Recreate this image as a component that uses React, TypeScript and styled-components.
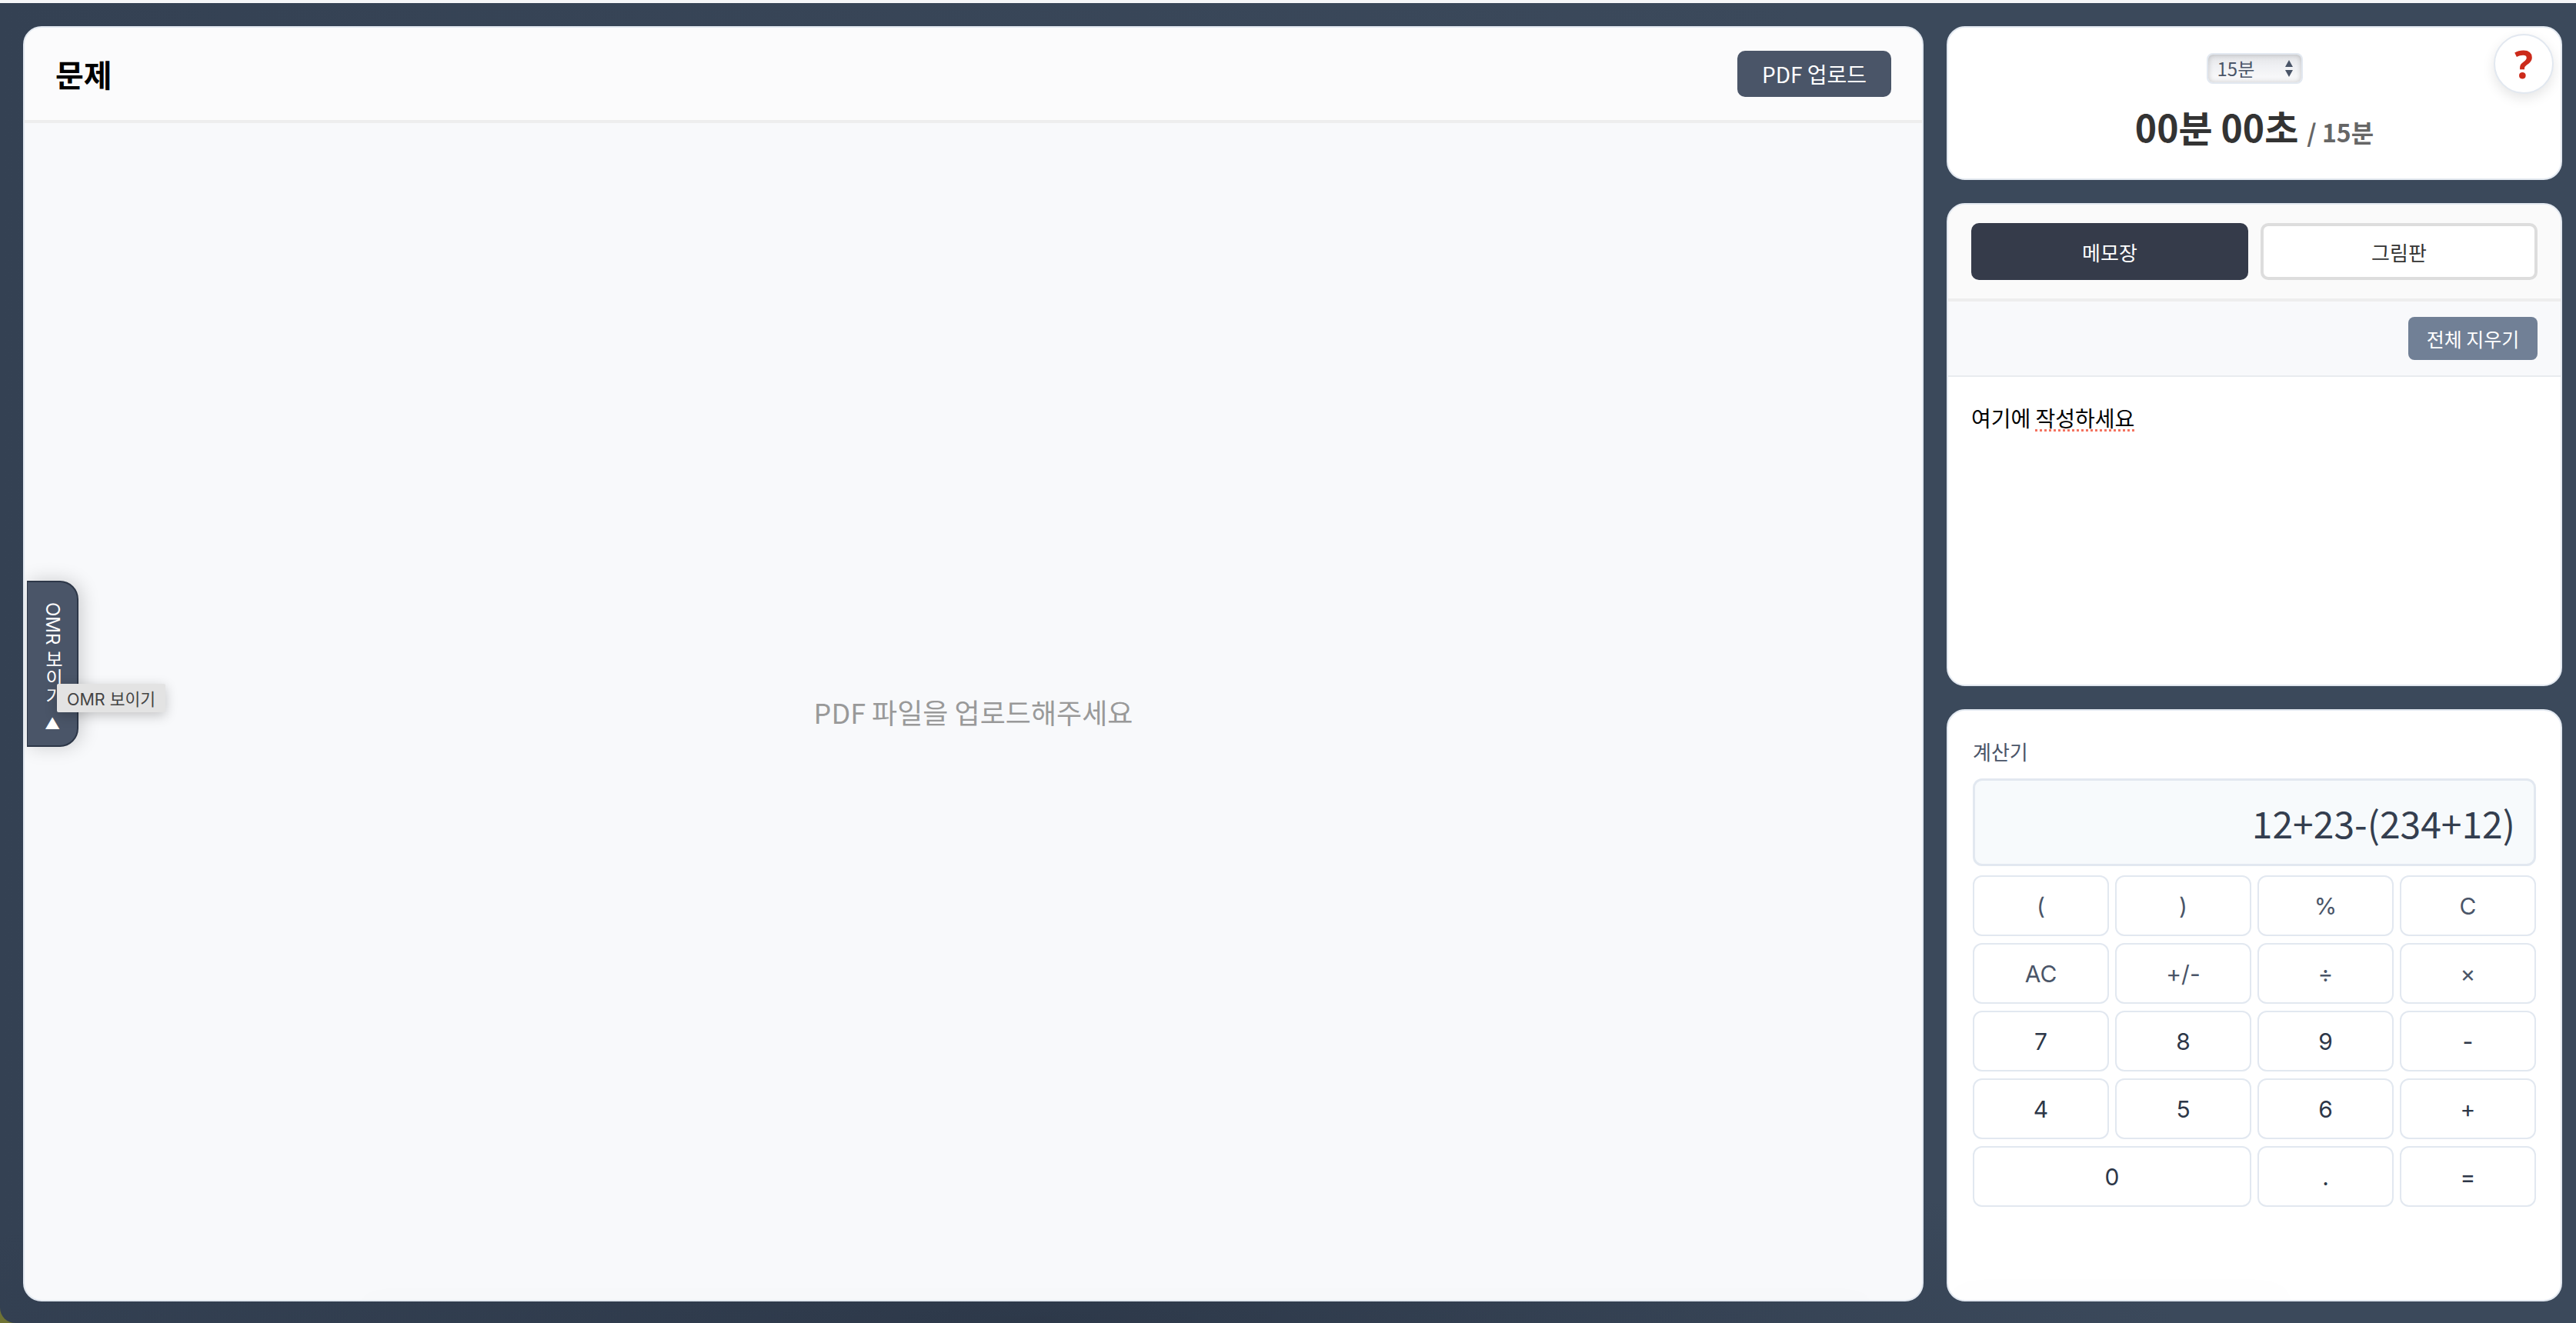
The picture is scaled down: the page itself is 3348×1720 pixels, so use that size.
import styled, { createGlobalStyle } from "styled-components";

const GlobalStyle = createGlobalStyle`
  html, body {
    margin: 0;
    padding: 0;
    background: linear-gradient(90deg, #6f7334 0 50%, #3a4759 50%);
  }
  * {
    box-sizing: border-box;
  }
`;

const Page = styled.div`
  width: 3348px;
  height: 1720px;
  padding: 30px 18px 28px 30px;
  border-top: 4px solid #f5f6f8;
  border-bottom-left-radius: 20px;
  display: grid;
  grid-template-columns: 2470px 800px;
  column-gap: 30px;
  background:
    radial-gradient(ellipse 1500px 260px at 40% 100%, rgba(36, 46, 62, 0.55), rgba(36, 46, 62, 0)),
    linear-gradient(90deg, #344153, #3b495b 70%);
  font-family: "Noto Sans CJK KR", "Noto Sans", sans-serif;
  overflow: hidden;
`;

const Panel = styled.main`
  position: relative;
  display: flex;
  flex-direction: column;
  border: 2px solid #e2e8f0;
  border-radius: 24px;
  background: #f8f9fb;
  overflow: hidden;
`;

const PanelHeader = styled.header`
  height: 124px;
  flex: none;
  padding: 0 40px;
  display: flex;
  align-items: center;
  justify-content: space-between;
  background: #fbfbfc;
  border-bottom: 4px solid #eeeeee;
`;

const Title = styled.h1`
  margin: 0;
  font-size: 40px;
  font-weight: 700;
  color: #000;
`;

const UploadButton = styled.button`
  width: 200px;
  height: 60px;
  border: 0;
  border-radius: 10px;
  background: #4a5568;
  color: #fff;
  font: inherit;
  font-size: 28px;
`;

const PanelBody = styled.div`
  flex: 1;
  display: flex;
  align-items: center;
  justify-content: center;
  color: #999;
  font-size: 36px;
`;

const EdgeShadow = styled.div<{ $left: number; $right: number; $blur: number }>`
  position: absolute;
  left: ${(p) => p.$left}px;
  right: ${(p) => p.$right}px;
  bottom: -4px;
  height: 4px;
  box-shadow: 0 0 ${(p) => p.$blur}px rgba(0, 0, 0, 0.1);
  pointer-events: none;
`;

const OmrToggle = styled.button`
  position: absolute;
  left: 3px;
  top: 50%;
  transform: translateY(-50%);
  width: 67px;
  height: 216px;
  padding: 26px 0 18px;
  display: flex;
  flex-direction: column;
  align-items: center;
  justify-content: space-between;
  border: 2px solid #2d3748;
  border-left-width: 1px;
  border-radius: 0 24px 24px 0;
  background: #4a5568;
  color: #fff;
  font-family: "Inter", "Noto Sans CJK KR", sans-serif;
  font-size: 24px;
  box-shadow: 4px 0 24px rgba(0, 0, 0, 0.18);
`;

const OmrLabel = styled.span`
  writing-mode: vertical-rl;
  white-space: nowrap;
  line-height: 1;
`;

const OmrArrow = styled.span`
  font-size: 20px;
  line-height: 1;
`;

const Tip = styled.div`
  position: absolute;
  left: 42px;
  top: 853px;
  height: 37px;
  padding: 0 13px;
  display: flex;
  align-items: center;
  border-radius: 2px;
  background: #e3e3e3;
  color: #444;
  font-family: "Inter", "Noto Sans CJK KR", sans-serif;
  font-size: 21.5px;
  white-space: nowrap;
  box-shadow: 0 4px 16px rgba(0, 0, 0, 0.22);
`;

const Side = styled.aside`
  display: grid;
  grid-template-rows: 200px 628px 770px;
  row-gap: 30px;
`;

const Card = styled.section<{ $bg?: string }>`
  position: relative;
  display: flex;
  flex-direction: column;
  border: 2px solid #e2e8f0;
  border-radius: 24px;
  background: ${(p) => p.$bg ?? "#fff"};
  overflow: hidden;
`;

const TimerCard = styled(Card)`
  align-items: center;
  padding-top: 33px;
`;

const SelectBox = styled.div`
  position: relative;
  width: 125px;
  height: 40px;
`;

const DurationSelect = styled.select`
  width: 100%;
  height: 100%;
  appearance: none;
  padding: 0 0 3px 12px;
  border: 2px solid #e2e8f0;
  border-radius: 8px;
  background: linear-gradient(#e2e3e6, #eff0f3 40%, #fbfbfc);
  box-shadow: inset 0 0 7px rgba(0, 0, 0, 0.2);
  color: #4a5568;
  font: inherit;
  font-size: 24px;
`;

const SelectArrows = styled.svg`
  position: absolute;
  right: 12px;
  top: 8px;
  width: 12px;
  height: 24px;
  pointer-events: none;
`;

const Clock = styled.div`
  margin-top: 25px;
  display: flex;
  align-items: baseline;
  gap: 11px;
  line-height: 60px;
`;

const Elapsed = styled.span`
  font-size: 48px;
  font-weight: 700;
  color: #333;
`;

const Limit = styled.span`
  font-size: 32px;
  font-weight: 700;
  color: #666;
`;

const HelpButton = styled.button`
  position: absolute;
  top: 8px;
  right: 9px;
  width: 78px;
  height: 78px;
  padding: 0;
  border: 2px solid #e2e8f0;
  border-radius: 50%;
  background: #fff;
  color: #cc2a1a;
  font-family: "Noto Sans", sans-serif;
  font-size: 50px;
  font-weight: 700;
  line-height: 1;
  box-shadow: 0 6px 16px rgba(0, 0, 0, 0.1);
`;

const TabBar = styled.div`
  height: 126px;
  flex: none;
  padding: 24px 30px;
  display: grid;
  grid-template-columns: 1fr 1fr;
  gap: 16px;
  background: #fafafa;
  border-bottom: 4px solid #eeeeee;
`;

const Tab = styled.button<{ $active?: boolean }>`
  border: ${(p) => (p.$active ? "0" : "4px solid #dddddd")};
  border-radius: 10px;
  background: ${(p) => (p.$active ? "#353b4a" : "#fff")};
  color: ${(p) => (p.$active ? "#fff" : "#333")};
  font: inherit;
  font-size: 26px;
`;

const MemoTools = styled.div`
  height: 98px;
  flex: none;
  padding: 20px 30px;
  display: flex;
  justify-content: flex-end;
  background: #f8f9fb;
  border-bottom: 2px solid #e9ecef;
`;

const ClearButton = styled.button`
  width: 168px;
  height: 56px;
  border: 0;
  border-radius: 8px;
  background: #718096;
  color: #fff;
  font: inherit;
  font-size: 25px;
`;

const MemoText = styled.div`
  flex: 1;
  padding: 32px 30px;
  background: #fff;
  color: #000;
  font-size: 28px;
  line-height: 42px;
`;

const Misspelled = styled.span`
  text-decoration: underline dotted #f4735f 3px;
  text-underline-offset: 3px;
`;

const CalcCard = styled(Card)`
  padding: 34px 32px 0;
`;

const CalcLabel = styled.h2`
  margin: 0 0 16px;
  font-size: 26px;
  line-height: 38px;
  font-weight: 400;
  color: #4a5568;
`;

const Display = styled.div`
  height: 114px;
  padding: 0 24px;
  display: flex;
  align-items: center;
  justify-content: flex-end;
  border: 3px solid #e2e8f0;
  border-radius: 12px;
  background: #f7fafc;
  color: #343e4f;
  font-size: 48px;
`;

const Keys = styled.div`
  margin-top: 12px;
  display: grid;
  grid-template-columns: repeat(4, 177px);
  grid-auto-rows: 79px;
  column-gap: 8px;
  row-gap: 9px;
`;

const Key = styled.button<{ $muted?: boolean; $wide?: boolean }>`
  grid-column: ${(p) => (p.$wide ? "span 2" : "auto")};
  border: 2px solid #e2e8f0;
  border-radius: 12px;
  background: #fff;
  color: ${(p) => (p.$muted ? "#4a5568" : "#2d3748")};
  font-family: "Inter", "Noto Sans", sans-serif;
  font-size: 30px;
`;

const keys: { label: string; muted?: boolean; wide?: boolean }[] = [
  { label: "(", muted: true },
  { label: ")", muted: true },
  { label: "%", muted: true },
  { label: "C", muted: true },
  { label: "AC", muted: true },
  { label: "+/-", muted: true },
  { label: "÷", muted: true },
  { label: "×", muted: true },
  { label: "7" },
  { label: "8" },
  { label: "9" },
  { label: "-" },
  { label: "4" },
  { label: "5" },
  { label: "6" },
  { label: "+" },
  { label: "0", wide: true },
  { label: "." },
  { label: "=" },
];

const App = () => {
  return (
    <Page>
      <GlobalStyle />
      <Panel>
        <PanelHeader>
          <Title>문제</Title>
          <UploadButton>PDF 업로드</UploadButton>
        </PanelHeader>
        <PanelBody>PDF 파일을 업로드해주세요</PanelBody>
        <EdgeShadow $left={370} $right={0} $blur={90} />
        <OmrToggle>
          <OmrLabel>OMR 보이기</OmrLabel>
          <OmrArrow>▲</OmrArrow>
        </OmrToggle>
        <Tip>OMR 보이기</Tip>
      </Panel>
      <Side>
        <TimerCard>
          <SelectBox>
            <DurationSelect defaultValue="15">
              <option value="15">15분</option>
              <option value="30">30분</option>
            </DurationSelect>
            <SelectArrows viewBox="0 0 12 24">
              <path d="M6 1l5 9H1z M6 23l5-9H1z" fill="#4a5568" />
            </SelectArrows>
          </SelectBox>
          <Clock>
            <Elapsed>00분 00초</Elapsed>
            <Limit>/ 15분</Limit>
          </Clock>
          <HelpButton>?</HelpButton>
        </TimerCard>
        <Card $bg="#fafafa">
          <TabBar>
            <Tab $active>메모장</Tab>
            <Tab>그림판</Tab>
          </TabBar>
          <MemoTools>
            <ClearButton>전체 지우기</ClearButton>
          </MemoTools>
          <MemoText>
            여기에 <Misspelled>작성하세요</Misspelled>
          </MemoText>
        </Card>
        <CalcCard>
          <CalcLabel>계산기</CalcLabel>
          <Display>12+23-(234+12)</Display>
          <Keys>
            {keys.map((k) => (
              <Key key={k.label} $muted={k.muted} $wide={k.wide}>
                {k.label}
              </Key>
            ))}
          </Keys>
          <EdgeShadow $left={0} $right={350} $blur={50} />
        </CalcCard>
      </Side>
    </Page>
  );
};

export default App;
